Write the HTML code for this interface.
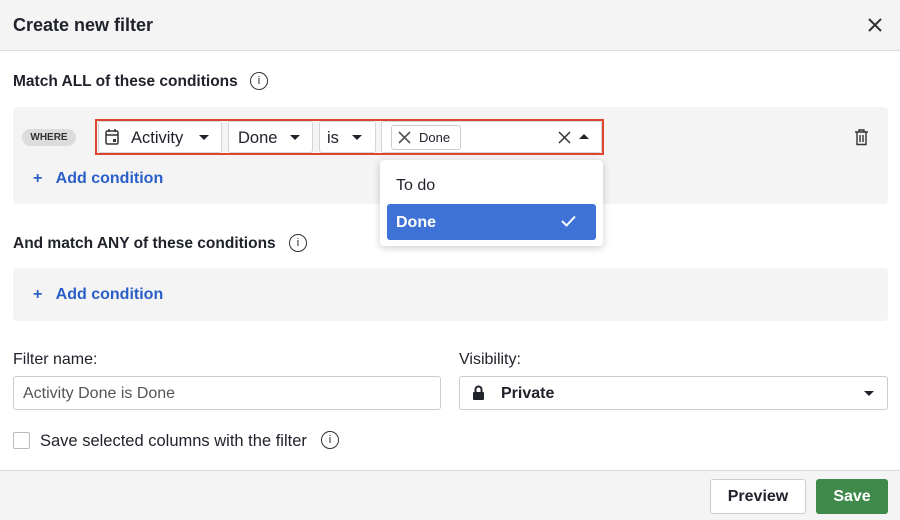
<!DOCTYPE html>
<html><head><meta charset="utf-8"><style>
*{box-sizing:border-box;margin:0;padding:0}
body{width:900px;height:520px;position:relative;background:#fff;font-family:"Liberation Sans",sans-serif;color:#21232c;overflow:hidden}
.a{position:absolute}
.t{white-space:nowrap;line-height:1}
.sel{position:absolute;background:#fff;border:1px solid #d4d5d8;border-radius:3px;top:121px;height:32px}
.car{position:absolute;width:0;height:0;border-left:5px solid transparent;border-right:5px solid transparent;border-top:5px solid #21232c}
.info{position:absolute;width:18px;height:18px;border:1.3px solid #333;border-radius:50%;font-size:11px;text-align:center;line-height:16px;font-family:"Liberation Sans",sans-serif}
.add{color:#2a5fc7;font-weight:bold;font-size:16px}
</style></head><body>
<div class="a" style="left:0;top:0;width:900px;height:51px;background:#f4f4f4;border-bottom:1px solid #dcdcdc"></div>
<div class="a t" style="left:13px;top:16px;font-size:18px;font-weight:bold">Create new filter</div>
<svg class="a" style="left:867px;top:17px" width="16" height="16"><path d="M2 2L14 14M14 2L2 14" stroke="#333" stroke-width="2"/></svg>

<div class="a t" style="left:13px;top:74px;font-size:15.5px;font-weight:bold">Match ALL of these conditions</div>
<div class="info" style="left:250px;top:72px">i</div>

<div class="a" style="left:13px;top:107px;width:875px;height:97px;background:#f4f4f4;border-radius:4px"></div>
<div class="a t" style="left:22px;top:129px;width:54px;height:17px;background:#dcdcdc;border-radius:9px;font-size:10px;font-weight:bold;text-align:center;line-height:17px;color:#333">WHERE</div>
<div class="a" style="left:95px;top:119px;width:509px;height:36px;border:2px solid #e0442c"></div>
<div class="sel" style="left:98px;width:124px"></div>
<svg class="a" style="left:105px;top:129px" width="14" height="16"><rect x="1" y="2" width="12" height="13" rx="1.5" fill="none" stroke="#333" stroke-width="1.5"/><path d="M1 6H13M4 0V3M10 0V3" stroke="#333" stroke-width="1.5"/><rect x="8" y="10" width="3" height="3" fill="#333"/></svg>
<div class="a t" style="left:131px;top:130px;font-size:16.5px">Activity</div>
<div class="car" style="left:199px;top:135px"></div>
<div class="sel" style="left:228px;width:85px"></div>
<div class="a t" style="left:238px;top:130px;font-size:16.5px">Done</div>
<div class="car" style="left:290px;top:135px"></div>
<div class="sel" style="left:319px;width:57px"></div>
<div class="a t" style="left:327px;top:130px;font-size:16.5px">is</div>
<div class="car" style="left:352px;top:135px"></div>
<div class="sel" style="left:381px;width:221px"></div>
<div class="a" style="left:391px;top:125px;width:70px;height:25px;border:1px solid #ccc;border-radius:3px;background:#fff"></div>
<svg class="a" style="left:398px;top:131px" width="13" height="13"><path d="M1 1L12 12M12 1L1 12" stroke="#555" stroke-width="1.6"/></svg>
<div class="a t" style="left:419px;top:131px;font-size:13px">Done</div>
<svg class="a" style="left:558px;top:131px" width="13" height="13"><path d="M1 1L12 12M12 1L1 12" stroke="#333" stroke-width="1.5"/></svg>
<div class="a" style="left:579px;top:134px;width:0;height:0;border-left:5px solid transparent;border-right:5px solid transparent;border-bottom:5px solid #21232c"></div>
<svg class="a" style="left:854px;top:129px" width="15" height="17"><path d="M1 3H14M5 3V1H10V3M3 3V15.5H12V3M6 6V13M9 6V13" fill="none" stroke="#333" stroke-width="1.4"/></svg>
<div class="a t add" style="left:33px;top:171px">+&nbsp;&nbsp;&nbsp;Add condition</div>

<div class="a t" style="left:13px;top:236px;font-size:15.5px;font-weight:bold">And match ANY of these conditions</div>
<div class="info" style="left:289px;top:234px">i</div>
<div class="a" style="left:13px;top:268px;width:875px;height:53px;background:#f4f4f4;border-radius:4px"></div>
<div class="a t add" style="left:33px;top:287px">+&nbsp;&nbsp;&nbsp;Add condition</div>

<div class="a" style="left:380px;top:160px;width:223px;height:86px;background:#fff;border-radius:4px;box-shadow:0 2px 8px rgba(0,0,0,.2)"></div>
<div class="a t" style="left:396px;top:178px;font-size:16px">To do</div>
<div class="a" style="left:387px;top:204px;width:209px;height:36px;background:#3e72d6;border-radius:3px"></div>
<div class="a t" style="left:396px;top:215px;font-size:16px;font-weight:bold;color:#fff">Done</div>
<svg class="a" style="left:561px;top:215px" width="15" height="12"><path d="M1 6L5.5 10.5L14 1.5" fill="none" stroke="#fff" stroke-width="2"/></svg>

<div class="a t" style="left:13px;top:352px;font-size:16px">Filter name:</div>
<div class="a" style="left:13px;top:376px;width:428px;height:34px;border:1px solid #ccc;border-radius:3px"></div>
<div class="a t" style="left:23px;top:386px;font-size:16px;color:#555">Activity Done is Done</div>
<div class="a t" style="left:459px;top:352px;font-size:16px">Visibility:</div>
<div class="a" style="left:459px;top:376px;width:429px;height:34px;border:1px solid #ccc;border-radius:3px"></div>
<svg class="a" style="left:472px;top:385px" width="13" height="16"><path d="M3.5 7V4.5A3 3 0 0 1 9.5 4.5V7" fill="none" stroke="#21232c" stroke-width="2"/><rect x="1" y="7" width="11" height="8" rx="1" fill="#21232c"/></svg>
<div class="a t" style="left:501px;top:386px;font-size:16px;font-weight:bold">Private</div>
<div class="car" style="left:864px;top:391px"></div>

<div class="a" style="left:13px;top:432px;width:17px;height:17px;border:1px solid #bbb;border-radius:2px"></div>
<div class="a t" style="left:40px;top:433px;font-size:16.5px">Save selected columns with the filter</div>
<div class="info" style="left:321px;top:431px">i</div>

<div class="a" style="left:0;top:470px;width:900px;height:50px;background:#f4f4f4;border-top:1px solid #dcdcdc"></div>
<div class="a t" style="left:710px;top:479px;width:96px;height:35px;background:#fff;border:1px solid #ccc;border-radius:3px;font-size:16px;font-weight:bold;text-align:center;line-height:33px">Preview</div>
<div class="a t" style="left:816px;top:479px;width:72px;height:35px;background:#3f8a4a;border-radius:3px;font-size:16px;font-weight:bold;text-align:center;line-height:35px;color:#fff">Save</div>
</body></html>
